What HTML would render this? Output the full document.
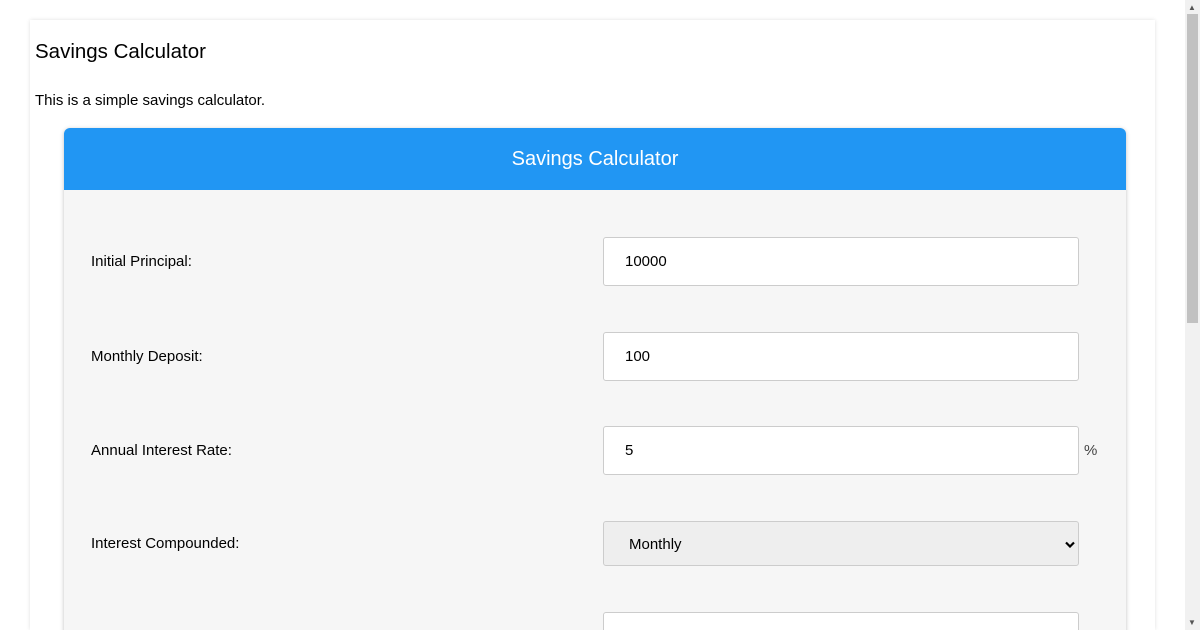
<!DOCTYPE html>
<html><head><style>
html,body{margin:0;padding:0;background:#fff;overflow:hidden;width:1200px;height:630px;font-family:"Liberation Sans",sans-serif;}
.page{position:absolute;left:30px;top:20px;width:1125px;height:610px;background:#fff;box-shadow:0 0 4px rgba(0,0,0,0.12);overflow:hidden;}
h1{position:absolute;left:5px;top:20px;margin:0;font-size:20.5px;font-weight:normal;color:#000;}
.p{position:absolute;left:5px;top:72px;font-size:15px;color:#000;}
.card{position:absolute;left:34px;top:108px;width:1062px;height:520px;background:#f6f6f6;border-radius:6px;box-shadow:0 1px 4px rgba(0,0,0,0.25);overflow:hidden;}
.hd{height:62px;background:#2196f3;color:#fff;font-size:20px;text-align:center;line-height:63px;}
.lbl{position:absolute;left:27px;font-size:15px;color:#000;}
.inp{position:absolute;left:539px;background:#fff;border:1px solid #ccc;border-radius:3px;font-size:15px;line-height:47px;padding-left:21px;box-sizing:border-box;width:476px;height:49px;}
.sel{background:#eee;height:45px;line-height:45px;padding-left:25px;}
.sb{position:absolute;left:1185px;top:0;width:15px;height:630px;background:#f1f1f1;}
.th{position:absolute;left:1187px;top:14px;width:11px;height:309px;background:#c1c1c1;}
</style></head><body>
<div class="page">
<h1>Savings Calculator</h1>
<div class="p">This is a simple savings calculator.</div>
<div class="card">
<div class="hd">Savings Calculator</div>
<div class="lbl" style="top:125px">Initial Principal:</div>
<div class="inp" style="top:109px">10000</div>
<div class="lbl" style="top:220px">Monthly Deposit:</div>
<div class="inp" style="top:204px">100</div>
<div class="lbl" style="top:314px">Annual Interest Rate:</div>
<div class="inp" style="top:298px">5</div>
<div style="position:absolute;left:1020px;top:314px;font-size:15px;color:#444">%</div>
<div class="lbl" style="top:407px">Interest Compounded:</div>
<div class="inp sel" style="top:393px;height:45px">Monthly<svg style="position:absolute;right:3px;top:19px" width="10" height="7" viewBox="0 0 10 7"><path d="M1 1.5L5 5.5L9 1.5" stroke="#000" stroke-width="2.2" fill="none"/></svg></div>
<div class="inp" style="top:484px"></div>
</div>
</div>
<div class="sb"></div><div class="th"></div>
<div style="position:absolute;left:1188px;top:3px;font-size:8px;color:#555">▲</div>
<div style="position:absolute;left:1188px;top:618px;font-size:8px;color:#555">▼</div>
</body></html>
